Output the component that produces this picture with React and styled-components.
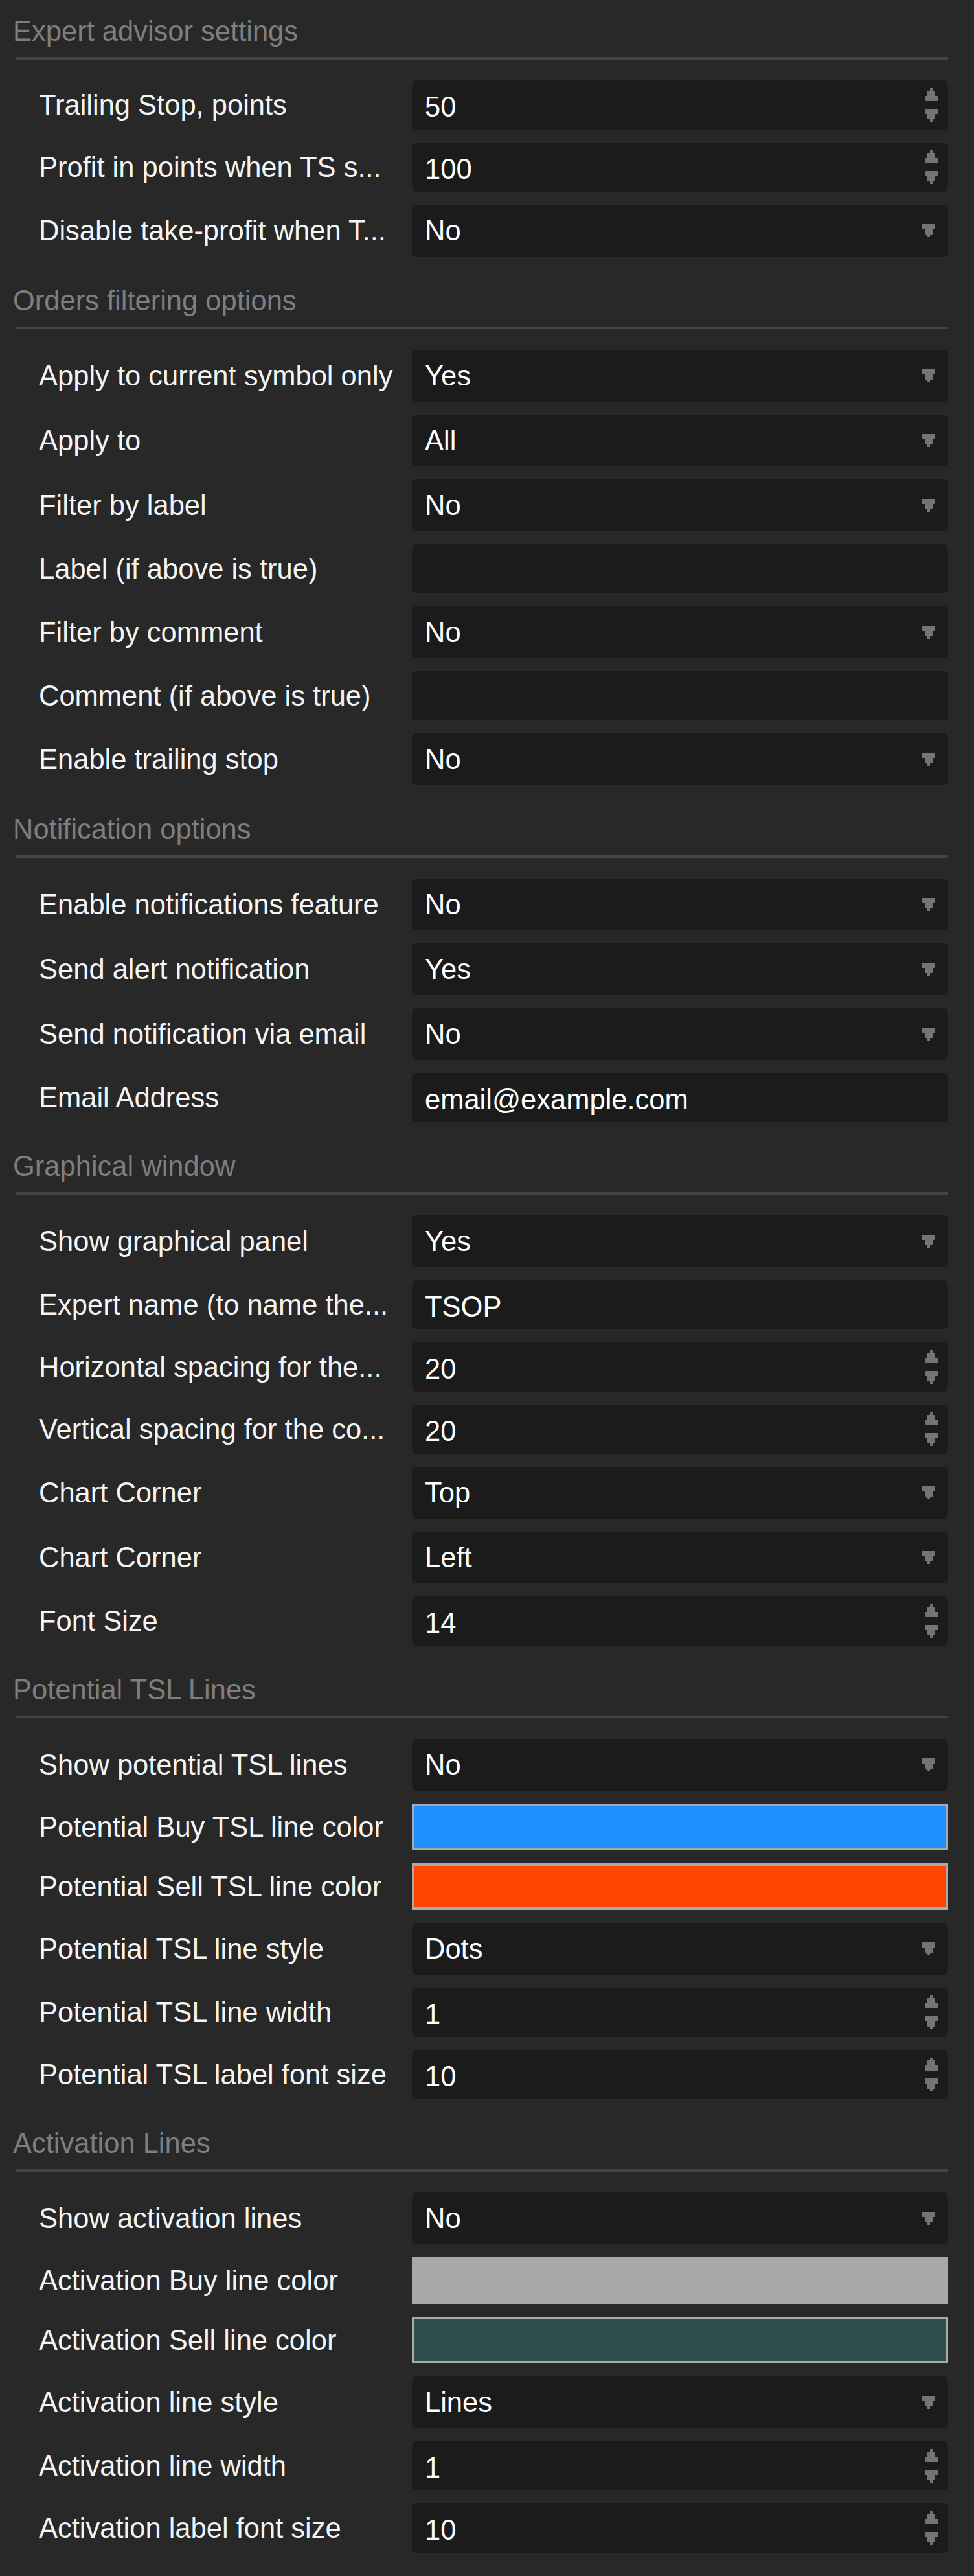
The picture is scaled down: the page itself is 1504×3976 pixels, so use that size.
import React from "react";
import styled, { createGlobalStyle } from "styled-components";

const GlobalStyle = createGlobalStyle`
  html, body {
    margin: 0;
    padding: 0;
    background: #282828;
  }
  body {
    font-family: "Liberation Sans", Arial, sans-serif;
    -webkit-font-smoothing: antialiased;
  }
`;

const FONT = `"Liberation Sans", Arial, sans-serif`;

const Panel = styled.div`
  width: 1504px;
  box-sizing: border-box;
  padding: 0 40px 16px 20px;
  background: #282828;
  display: flex;
  flex-direction: column;
`;

const Section = styled.section`
  display: flex;
  flex-direction: column;
`;

const SectionTitle = styled.div`
  box-sizing: border-box;
  height: 88px;
  padding-top: 24px;
  font-family: ${FONT};
  font-size: 43.5px;
  line-height: 48px;
  color: #7e7e7e;
  white-space: nowrap;
`;

const Divider = styled.div`
  height: 4px;
  margin-left: 4px;
  background: #444444;
  margin-bottom: 32px;
`;

const Rows = styled.div`
  display: flex;
  flex-direction: column;
  gap: 20px;
  padding-bottom: 20px;
`;

const Row = styled.div`
  display: flex;
  align-items: center;
  padding-left: 40px;
`;

const Label = styled.div`
  flex: none;
  width: 576px;
  font-family: ${FONT};
  font-size: 43.5px;
  line-height: 48px;
  color: #f4f4f4;
  white-space: nowrap;
  overflow: hidden;
`;

const heights = { select: 80, spin: 76, text: 76 };

const Box = styled.div`
  flex: 1;
  box-sizing: border-box;
  height: ${(p) => heights[p.$kind]}px;
  display: flex;
  align-items: center;
  padding-left: 20px;
  padding-right: ${(p) => (p.$kind === "spin" ? 16 : 20)}px;
  background: #1b1b1b;
  border-radius: 7px;
`;

const Value = styled.div`
  flex: 1;
  font-family: ${FONT};
  font-size: 43.5px;
  line-height: 48px;
  color: #ffffff;
  white-space: nowrap;
  padding-top: ${(p) => (p.$shift ? 6 : 0)}px;
`;

const Swatch = styled.div`
  flex: 1;
  box-sizing: border-box;
  height: 72px;
  background: ${(p) => p.$color};
  border: 4px solid #a9a9a9;
`;

const ArrowIcon = styled.svg`
  flex: none;
  display: block;
`;

// stepped little triangles, the way the terminal draws its combo/spin arrows
const DOWN = "M0 0H20V8H16V16H12V20H8V16H4V8H0Z";
const UP = "M8 0H12V4H16V12H20V20H0V12H4V4H8Z";

const DropArrow = () => (
  <ArrowIcon width="20" height="20" viewBox="0 0 20 20">
    <path d={DOWN} fill="#747474" />
  </ArrowIcon>
);

const SpinArrows = () => (
  <ArrowIcon width="20" height="52" viewBox="0 0 20 52">
    <path d={UP} fill="#747474" />
    <path d={DOWN} transform="translate(0 32)" fill="#747474" />
  </ArrowIcon>
);

const sections = [
  {
    title: "Expert advisor settings",
    rows: [
      { label: "Trailing Stop, points", kind: "spin", value: "50" },
      { label: "Profit in points when TS s...", kind: "spin", value: "100" },
      { label: "Disable take-profit when T...", kind: "select", value: "No" },
    ],
  },
  {
    title: "Orders filtering options",
    rows: [
      { label: "Apply to current symbol only", kind: "select", value: "Yes" },
      { label: "Apply to", kind: "select", value: "All" },
      { label: "Filter by label", kind: "select", value: "No" },
      { label: "Label (if above is true)", kind: "text", value: "" },
      { label: "Filter by comment", kind: "select", value: "No" },
      { label: "Comment (if above is true)", kind: "text", value: "" },
      { label: "Enable trailing stop", kind: "select", value: "No" },
    ],
  },
  {
    title: "Notification options",
    rows: [
      { label: "Enable notifications feature", kind: "select", value: "No" },
      { label: "Send alert notification", kind: "select", value: "Yes" },
      { label: "Send notification via email", kind: "select", value: "No" },
      { label: "Email Address", kind: "text", value: "email@example.com" },
    ],
  },
  {
    title: "Graphical window",
    rows: [
      { label: "Show graphical panel", kind: "select", value: "Yes" },
      { label: "Expert name (to name the...", kind: "text", value: "TSOP" },
      { label: "Horizontal spacing for the...", kind: "spin", value: "20" },
      { label: "Vertical spacing for the co...", kind: "spin", value: "20" },
      { label: "Chart Corner", kind: "select", value: "Top" },
      { label: "Chart Corner", kind: "select", value: "Left" },
      { label: "Font Size", kind: "spin", value: "14" },
    ],
  },
  {
    title: "Potential TSL Lines",
    rows: [
      { label: "Show potential TSL lines", kind: "select", value: "No" },
      { label: "Potential Buy TSL line color", kind: "color", value: "#1e90ff" },
      { label: "Potential Sell TSL line color", kind: "color", value: "#ff4500" },
      { label: "Potential TSL line style", kind: "select", value: "Dots" },
      { label: "Potential TSL line width", kind: "spin", value: "1" },
      { label: "Potential TSL label font size", kind: "spin", value: "10" },
    ],
  },
  {
    title: "Activation Lines",
    rows: [
      { label: "Show activation lines", kind: "select", value: "No" },
      { label: "Activation Buy line color", kind: "color", value: "#a9a9a9" },
      { label: "Activation Sell line color", kind: "color", value: "#2f4f4f" },
      { label: "Activation line style", kind: "select", value: "Lines" },
      { label: "Activation line width", kind: "spin", value: "1" },
      { label: "Activation label font size", kind: "spin", value: "10" },
    ],
  },
];

function Control({ kind, value }) {
  if (kind === "color") return <Swatch $color={value} />;
  return (
    <Box $kind={kind}>
      <Value $shift={kind !== "select"}>{value}</Value>
      {kind === "select" && <DropArrow />}
      {kind === "spin" && <SpinArrows />}
    </Box>
  );
}

export default function App() {
  return (
    <>
      <GlobalStyle />
      <Panel>
        {sections.map((s) => (
          <Section key={s.title}>
            <SectionTitle>{s.title}</SectionTitle>
            <Divider />
            <Rows>
              {s.rows.map((r, i) => (
                <Row key={i}>
                  <Label>{r.label}</Label>
                  <Control kind={r.kind} value={r.value} />
                </Row>
              ))}
            </Rows>
          </Section>
        ))}
      </Panel>
    </>
  );
}
